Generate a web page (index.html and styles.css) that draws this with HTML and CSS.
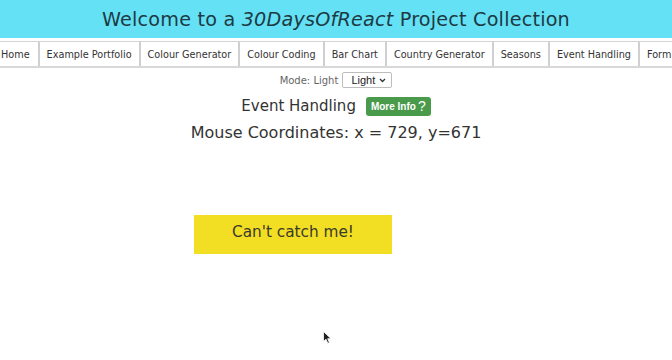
FILE: index.html
```html
<!DOCTYPE html>
<html>
<head>
<meta charset="utf-8">
<link rel="stylesheet" href="styles.css">
</head>
<body>
<header class="banner">
  <h1 class="title">Welcome to a <em>30DaysOfReact</em> Project Collection</h1>
</header>
<nav class="nav">
  <a class="nav-item">Home</a>
  <a class="nav-item">Example Portfolio</a>
  <a class="nav-item">Colour Generator</a>
  <a class="nav-item">Colour Coding</a>
  <a class="nav-item">Bar Chart</a>
  <a class="nav-item">Country Generator</a>
  <a class="nav-item">Seasons</a>
  <a class="nav-item">Event Handling</a>
  <a class="nav-item">Form</a>
</nav>
<div class="mode">
  <span class="mode-label">Mode: Light</span>
  <select class="mode-select"><option>Light</option><option>Dark</option></select>
</div>
<main class="content">
  <div class="heading-row">
    <h2 class="heading">Event Handling</h2>
    <button class="info-btn">More Info <span class="q">?</span></button>
  </div>
  <p class="coords">Mouse Coordinates: x = 729, y=671</p>
</main>
<button class="catch">Can't catch me!</button>
<svg class="cursor" width="9" height="13" viewBox="0 0 9 13"><path d="M0.5 0.5 L0.5 10.5 L3 8.2 L4.8 12.3 L6.4 11.6 L4.7 7.7 L8 7.7 Z" fill="#222" stroke="#fff" stroke-width="0.8"/></svg>
</body>
</html>
```
FILE: styles.css
```css
html, body {
  margin: 0;
  padding: 0;
  background: #fff;
  font-family: "DejaVu Sans", "Open Sans", sans-serif;
  color: #333;
  overflow: hidden;
}
.banner {
  background: #64e1f5;
  height: 38px;
  display: flex;
  align-items: center;
  justify-content: center;
  border-bottom: 3px solid #fff;
}
.title {
  margin: 0;
  font-weight: 400;
  font-size: 19.2px;
  color: #1d3a44;
  letter-spacing: 0.2px;
}
.title em { font-style: italic; }
.nav {
  display: flex;
  border-top: 1px solid #d4d4d4;
  border-bottom: 2px solid #d8d8d8;
  height: 24px;
  white-space: nowrap;
}
.nav-item {
  display: flex;
  align-items: center;
  padding: 0 7px;
  font-size: 9.7px;
  color: #333;
  border-right: 2px solid #d0d0d0;
  flex-shrink: 0;
}
.nav-item:first-child { padding-left: 1px; padding-right: 8px; }
.mode {
  display: flex;
  justify-content: center;
  align-items: center;
  gap: 4px;
  margin-top: 4px;
  height: 16px;
}
.mode-label {
  font-size: 10px;
  color: #666;
}
.mode-select {
  -webkit-appearance: none;
  appearance: none;
  width: 50px;
  height: 16px;
  font-family: "Liberation Sans", Arial, sans-serif;
  font-size: 11px;
  padding: 0 10px 0 2px;
  border: 1px solid #bdbdbd;
  border-radius: 2px;
  background-color: #fff;
  background-image: url("data:image/svg+xml;utf8,<svg xmlns='http://www.w3.org/2000/svg' width='7' height='5' viewBox='0 0 7 5'><path d='M1 1 L3.5 3.5 L6 1' fill='none' stroke='%23333' stroke-width='1.3'/></svg>");
  background-repeat: no-repeat;
  background-position: right 5px center;
  color: #222;
  text-align: center;
}
.content {
  display: flex;
  flex-direction: column;
  align-items: center;
}
.heading-row {
  display: flex;
  align-items: center;
  gap: 10px;
  margin-top: 8px;
  height: 20px;
}
.heading {
  margin: 0;
  font-size: 15px;
  font-weight: 400;
  color: #333;
}
.info-btn {
  background: #4a9a4c;
  color: #fff;
  border: none;
  border-radius: 3px;
  height: 19px;
  padding: 0 5px;
  font-family: "Liberation Sans", Arial, sans-serif;
  font-weight: 700;
  font-size: 10px;
  display: flex;
  align-items: center;
}
.info-btn .q {
  font-weight: 400;
  font-size: 14px;
  margin-left: 2px;
}
.coords {
  margin: 7px 0 0;
  font-size: 16px;
  color: #333;
}
.catch {
  position: absolute;
  left: 194px;
  top: 215px;
  width: 198px;
  height: 39px;
  padding: 0 0 6px;
  background: #f2de23;
  border: none;
  font-family: "DejaVu Sans", "Open Sans", sans-serif;
  font-size: 15.3px;
  color: #3a3a2a;
}
.cursor {
  position: absolute;
  left: 323px;
  top: 331px;
}
```
